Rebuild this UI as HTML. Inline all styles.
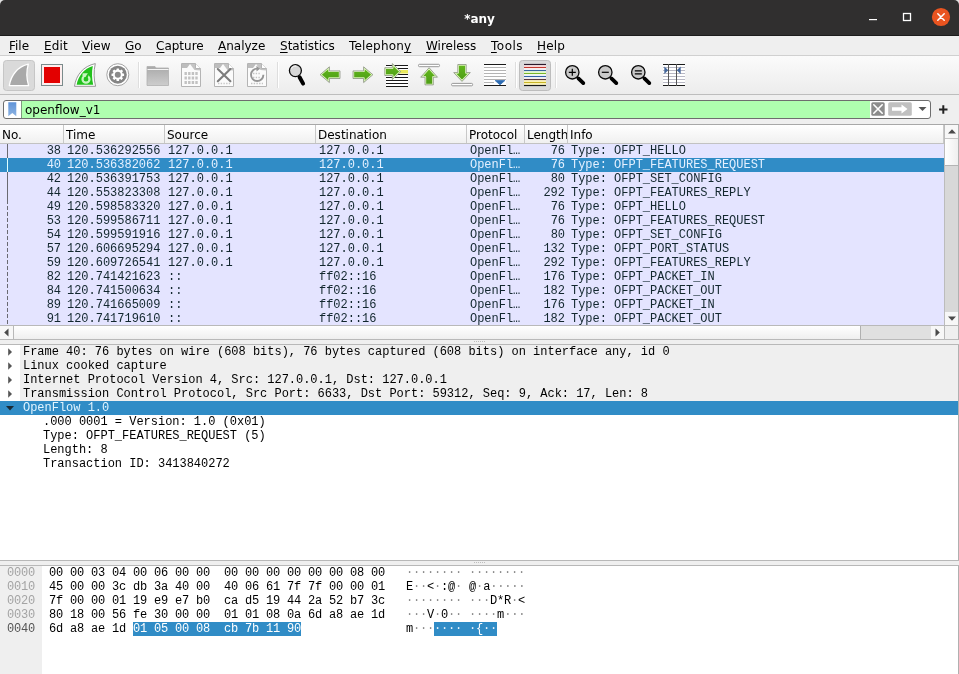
<!DOCTYPE html>
<html><head><meta charset="utf-8"><title>*any</title>
<style>
*{box-sizing:border-box;margin:0;padding:0}
html,body{width:959px;height:674px;overflow:hidden;background:#efefef}
body{position:relative;font:12px "DejaVu Sans","Liberation Sans",sans-serif;color:#000}
.abs{position:absolute;will-change:transform}
#title{left:0;top:0;width:959px;height:36px;background:#302f2f;border-bottom:1px solid #1c1c1c;border-radius:5px 5px 0 0}
#corner-l{left:0;top:0;width:8px;height:8px;background:#e0e0e0}
#corner-r{right:0;top:0;width:8px;height:8px;background:#e0e0e0}
#title .t{position:absolute;left:0;width:959px;top:11px;text-align:center;color:#fff;font-weight:bold;font-size:12px;line-height:16px}
#menu{left:0;top:36px;width:959px;height:20px;background:#efefef;border-bottom:1px solid #d0d0d0}
#menu span{position:absolute;top:2px;line-height:16px;white-space:pre}
#menu u{text-decoration:underline;text-underline-offset:2px}
#tb{left:0;top:56px;width:959px;height:39px;background:linear-gradient(#fbfbfb,#ececec);border-bottom:1px solid #bdbdbd}
#tb svg{position:absolute}
#tb .pressed{position:absolute;top:4px;width:31px;height:31px;background:#dcdcdc;border:1px solid #c4c4c4;border-radius:3px}
#tb .sep{position:absolute;top:8px;width:1px;height:24px;background:#d0d0d0;border-right:1px solid #fff;box-sizing:content-box}
#fbar{left:0;top:95px;width:959px;height:29px;background:#efefef}
#finput{position:absolute;left:3px;top:5px;width:928px;height:19px;border:1px solid #6e6e6e;border-radius:3px;background:#fff;overflow:hidden}
#fbm{position:absolute;left:4px;top:1px}
#fgreen{position:absolute;left:17px;top:0;width:849px;height:17px;background:#afffaf;border-left:1px solid #7f9a7f}
#fgreen span{position:absolute;left:3px;top:1px;line-height:16px}
#plist{left:0;top:124px;width:959px;height:216px;border-top:1px solid #a8a8a8;background:#e4e4ff;overflow:hidden}
#phead{position:absolute;left:0;top:0;width:944px;height:19px;background:linear-gradient(#ffffff,#f0f0f0);border-bottom:1px solid #c2c2c2}
#phead .hc{position:absolute;top:0;height:18px;border-right:1px solid #c8c8c8;overflow:hidden}
#phead .hc span{position:absolute;left:2px;top:2px;line-height:16px;white-space:pre}
.pr{position:absolute;left:0;width:944px;height:14px;font:12px/14px "Liberation Mono",monospace;color:#12272e;white-space:pre;letter-spacing:-0.015px}
.pr .c{position:absolute;top:0}
.pr.sel{background:#308cc6;color:#e4f0ff}
#rel{position:absolute;left:7px;top:19px;width:1px;height:56px;background:#6a6a72}
#rel2{position:absolute;left:7px;top:75px;width:1px;height:125px;background:repeating-linear-gradient(#6a6a72 0 4px,transparent 4px 6px)}
#relsel{position:absolute;left:7px;top:33px;width:1px;height:14px;background:#dff}
#vsb{position:absolute;left:944px;top:0;width:15px;height:200px;background:#d8d8d8;border-left:1px solid #bcbcbc;border-right:1px solid #b0b0b0}
#vsb .btn{position:absolute;left:0;width:13px;height:13px;background:#f7f7f7}
#vsb .btn svg{position:absolute;left:0;top:0}
#vsb .thumb{position:absolute;left:0;top:13px;width:13px;height:28px;background:linear-gradient(90deg,#ffffff,#efefef);border-top:1px solid #c4c4c4;border-bottom:1px solid #b4b4b4}
#hsb{position:absolute;left:0;top:200px;width:944px;height:15px;background:#e0e0e0;border-top:1px solid #b9b9b9;border-bottom:1px solid #b9b9b9}
#hsb .btn{position:absolute;top:0;width:13px;height:13px;background:#f7f7f7}
#hsb .btn svg{position:absolute;left:0;top:0}
#hsb .thumb{position:absolute;left:13px;top:0;width:848px;height:13px;background:linear-gradient(#ffffff,#efefef);border-left:1px solid #b8b8b8;border-right:1px solid #b0b0b0}
#corner{position:absolute;left:944px;top:200px;width:15px;height:15px;background:#efefef;border:1px solid #b9b9b9;border-right-color:#b0b0b0}
#det{left:0;top:344px;width:959px;height:217px;background:#fff;border-top:1px solid #b8b8b8;border-bottom:1px solid #b8b8b8;overflow:hidden}
.dr{position:absolute;left:0;width:959px;height:14px;font:12px/14px "Liberation Mono",monospace;color:#000;white-space:pre;letter-spacing:-0.017px}
.dr span{position:absolute;top:0}
.dr.top{background:linear-gradient(90deg,#fff 20px,#efefef 20px)}
.dr.sel{background:#308cc6;color:#e0f4ff}
#det:after{content:'';position:absolute;right:0;top:0;width:1px;height:100%;background:#b0b0b0}
.dr .ar{position:absolute;left:5px;top:0}
#hex{left:0;top:565px;width:959px;height:109px;background:#fff;border-top:1px solid #b8b8b8;overflow:hidden}
#off{position:absolute;left:0;top:0;width:42px;height:112px;background:#efefef}
.hr{position:absolute;left:0;width:959px;height:14px;font:12px/14px "Liberation Mono",monospace;color:#000;white-space:pre;letter-spacing:-0.2px}
.hr span{position:absolute;top:0}
.hr .o{color:#a4a4a4}
.hr .o.cur{color:#555}
#hex:after{content:'';position:absolute;right:0;top:0;width:1px;height:100%;background:#b0b0b0}
.grip{position:absolute;height:1px;width:11px;background:repeating-linear-gradient(90deg,#bdbdbd 0 1px,transparent 1px 2px)}
.hr b{font-weight:normal;background:#308cc6;color:#fff}
.hr i{font-style:normal;color:#8c8c8c}
.hr b i{color:#e8f2fa}
</style></head><body>
<div id="corner-l" class="abs"></div><div id="corner-r" class="abs"></div>
<div id="title" class="abs"><div class="t">*any</div><svg class="abs" style="left:860px;top:0" width="99" height="36" viewBox="0 0 99 36"><rect x="9" y="19" width="8" height="1.200" fill="#fff"/><rect x="43.5" y="13.5" width="7" height="7" fill="none" stroke="#fff" stroke-width="1.3"/><circle cx="81" cy="17" r="9.100" fill="#e95420"/><path d="M77.800 13.800 L84.200 20.200 M84.200 13.800 L77.800 20.200" stroke="#fff" stroke-width="1.500" stroke-linecap="round"/></svg></div>
<div id="menu" class="abs"><span style="left:9px"><u>F</u>ile</span><span style="left:44px"><i style="font-style:normal;letter-spacing:.15px"><u>E</u>dit</i></span><span style="left:82px"><u>V</u>iew</span><span style="left:125px"><u>G</u>o</span><span style="left:156px"><u>C</u>apture</span><span style="left:218px"><u>A</u>nalyze</span><span style="left:280px"><u>S</u>tatistics</span><span style="left:349px"><i style="font-style:normal;letter-spacing:.18px">Telephon<u>y</u></i></span><span style="left:426px"><u>W</u>ireless</span><span style="left:491px"><i style="font-style:normal;letter-spacing:.5px"><u>T</u>ools</i></span><span style="left:537px"><i style="font-style:normal;letter-spacing:.15px"><u>H</u>elp</i></span></div>
<div id="tb" class="abs"><svg style="left:0;top:0" width="959" height="38" viewBox="0 56 959 38">
<defs>
<linearGradient id="gA" x1="0" y1="0" x2="0" y2="1"><stop offset="0" stop-color="#63b81c"/><stop offset="1" stop-color="#4c9a16"/></linearGradient>
<linearGradient id="gF" x1="0" y1="0" x2="0" y2="1"><stop offset="0" stop-color="#a9a9a9"/><stop offset="1" stop-color="#cdcdcd"/></linearGradient>
<linearGradient id="gL" x1="0" y1="0" x2="0" y2="1"><stop offset="0" stop-color="#e2e2e2"/><stop offset="1" stop-color="#bdbdbd"/></linearGradient>
<clipPath id="cBack"><path d="M320.100 74.700L329.400 66.800V70.900H340V78.500H329.400V82.600Z"/></clipPath>
<clipPath id="cFwd"><path d="M372.900 74.700L363.600 66.800V70.900H353V78.500H363.600V82.600Z"/></clipPath>
<clipPath id="cGoto"><path d="M400.800 71.600L392.300 63.600V67.700H384.800V75.500H392.300V79.600Z"/></clipPath>
<clipPath id="cFirst"><path d="M429.100 67.700L437.500 77.200H433.300V84.900H425V77.200H420.700Z"/></clipPath>
<clipPath id="cLast"><path d="M462 81.400L470.300 72.600H466.200V64.500H457.800V72.600H453.700Z"/></clipPath>
</defs>
<!-- pressed backgrounds -->
<rect x="3.5" y="60.5" width="31" height="30" rx="3" fill="#dadada" stroke="#c6c6c6"/>
<rect x="519.5" y="60.5" width="31" height="30" rx="3" fill="#dadada" stroke="#bdbdbd"/>
<!-- separators -->
<g stroke="#dedede" stroke-width="1"><path d="M138.5 62v26M277.5 62v26M515.5 62v26M555.5 62v26"/></g>
<g stroke="#ffffff" stroke-width="1"><path d="M139.5 62v26M278.5 62v26M516.5 62v26M556.5 62v26"/></g>
<!-- shark fin start (gray) -->
<path d="M9.3 85.6 C11 75 18 66.5 28.3 64.2 C26.3 71 26.6 79 28.6 85.6 Z" fill="#a9a9a9" stroke="#ffffff" stroke-width="1.3" stroke-linejoin="round"/>
<!-- stop -->
<rect x="41.5" y="64.5" width="21" height="21" fill="#fdeeee" stroke="#7a8b8b"/>
<rect x="44" y="67" width="16" height="16" fill="#e30000"/>
<!-- restart fin -->
<path d="M74.5 86.3 C76 75 83.5 66 95.3 63.6 C93.5 71 93.8 79.5 95.6 86.3 Z" fill="#ffffff" stroke="#8c8c8c" stroke-width="0.9" stroke-linejoin="round"/>
<path d="M76.6 84.8 C78.3 76 84 68.5 92.8 66 C91.6 72 91.9 79 93.2 84.8 Z" fill="#22c11c"/>
<circle cx="86" cy="79.200" r="3.500" fill="none" stroke="#c6f6c2" stroke-width="2.200"/>
<path d="M86 79.200L85.200 73v-1h3.300v4z" fill="#22c11c"/>
<path d="M82.300 75.800l0.400-2.600h5.200l-2.400 3.600z" fill="#c6f6c2"/>
<!-- options gear -->
<circle cx="117.8" cy="74.7" r="11" fill="#ffffff" stroke="#a4a4a4" stroke-width="1"/>
<circle cx="117.8" cy="74.7" r="9" fill="#858585"/>
<g fill="#ffffff"><circle cx="117.8" cy="74.7" r="4.900"/>
<g transform="translate(117.8 74.7)"><rect x="-1.300" y="-6.300" width="2.600" height="12.600" rx="0.500"/><rect x="-1.300" y="-6.300" width="2.600" height="12.600" rx="0.500" transform="rotate(45)"/><rect x="-1.300" y="-6.300" width="2.600" height="12.600" rx="0.500" transform="rotate(90)"/><rect x="-1.300" y="-6.300" width="2.600" height="12.600" rx="0.500" transform="rotate(135)"/></g></g>
<circle cx="117.8" cy="74.7" r="3" fill="#8a8a8a"/>
<!-- open folder (disabled) -->
<path d="M147 66.5h8l1 1.5h12.5v17.5h-21.5z" fill="url(#gF)" stroke="#b0b0b0" stroke-width="0.8"/>
<path d="M147.5 69.5h21" stroke="#f4f4f4" stroke-width="1"/>
<!-- save (disabled doc) -->
<g id="doc"><path d="M181.5 63.5h14l5 5v18h-19z" fill="#fbfbfb" stroke="#b4b4b4"/><path d="M182 64h8l-3 4h-5z" fill="#bdbdbd"/><path d="M190 64h5.5l5 5v1.500l-6-0.500z" fill="#c4c4c4"/><path d="M195.500 63.500v5h5" fill="#ffffff" stroke="#b4b4b4" stroke-linejoin="round"/></g>
<g stroke="#c2c2c2" stroke-width="3" stroke-dasharray="2.400 1.200"><path d="M184.500 73.500h14M184.500 78h14M184.500 82.500h14"/></g>
<!-- close (disabled doc with X) -->
<use href="#doc" x="33"/>
<g stroke="#c8c8c8" stroke-width="1.400" stroke-dasharray="1.400 1.300"><path d="M218 83.500h12"/></g>
<path d="M217.800 69l12.600 12.200M230.400 69l-12.600 12.200" stroke="#7c7c7c" stroke-width="2.100" stroke-linecap="round"/>
<!-- reload (disabled doc with circular arrow) -->
<use href="#doc" x="66"/>
<g stroke="#c4c4c4" stroke-width="1.400" stroke-dasharray="1.400 1.300"><path d="M253 73.500h8M253 77.500h8M251 83.500h12"/></g>
<path d="M257.500 68.600 A6.200 6.200 0 1 0 263.400 74.800" fill="none" stroke="#969696" stroke-width="1.900"/>
<path d="M256.500 65.800l3.600 2.900l-3.600 2.700z" fill="#969696"/>
<!-- find -->
<path d="M299.600 77.300l3.500 6.300" stroke="#000" stroke-width="4" stroke-linecap="round"/>
<circle cx="295.400" cy="70.600" r="6" fill="#d6d6d6" stroke="#0a0a0a" stroke-width="1.300"/>
<path d="M291.500 68.500a4.300 4.300 0 0 1 5-2.400" fill="none" stroke="#ffffff" stroke-width="1"/>
<!-- back -->
<path d="M320.100 74.700L329.400 66.800V70.900H340V78.500H329.400V82.600Z" fill="url(#gA)" stroke="#dcf7b8" stroke-width="2.400" stroke-linejoin="round" clip-path="url(#cBack)"/>
<path d="M320.100 74.700L329.400 66.800V70.900H340V78.500H329.400V82.600Z" fill="none" stroke="#8f9489" stroke-width="0.800" stroke-linejoin="round"/>
<!-- forward -->
<path d="M372.900 74.700L363.600 66.800V70.900H353V78.500H363.600V82.600Z" fill="url(#gA)" stroke="#dcf7b8" stroke-width="2.400" stroke-linejoin="round" clip-path="url(#cFwd)"/>
<path d="M372.900 74.700L363.600 66.800V70.900H353V78.500H363.600V82.600Z" fill="none" stroke="#8f9489" stroke-width="0.800" stroke-linejoin="round"/>
<!-- goto -->
<rect x="386" y="65" width="22" height="22" fill="#ffffff"/>
<rect x="386" y="70" width="22" height="3.500" fill="#e9e95c"/>
<g stroke="#1a1a1a" stroke-width="1"><path d="M386 65.500h22M386 68.500h22M386 74.500h22M386 77.500h22M386 80.500h22M386 83.500h22M386 86.500h22"/></g>
<path d="M400.800 71.600L392.300 63.600V67.700H384.800V75.500H392.300V79.600Z" fill="url(#gA)" stroke="#dcf7b8" stroke-width="2.400" stroke-linejoin="round" clip-path="url(#cGoto)"/>
<path d="M400.800 71.600L392.300 63.600V67.700H384.800V75.500H392.300V79.600Z" fill="none" stroke="#8f9489" stroke-width="0.800" stroke-linejoin="round"/>
<!-- first -->
<rect x="418.500" y="64.300" width="21" height="2.400" rx="1" fill="#ffffff" stroke="#8c8c8c" stroke-width="0.900"/>
<path d="M429.100 67.700L437.500 77.200H433.300V84.900H425V77.200H420.700Z" fill="url(#gA)" stroke="#dcf7b8" stroke-width="2.400" stroke-linejoin="round" clip-path="url(#cFirst)"/>
<path d="M429.100 67.700L437.500 77.200H433.300V84.900H425V77.200H420.700Z" fill="none" stroke="#8f9489" stroke-width="0.800" stroke-linejoin="round"/>
<!-- last -->
<rect x="451.600" y="83.400" width="21" height="2.400" rx="1" fill="#ffffff" stroke="#8c8c8c" stroke-width="0.900"/>
<path d="M462 81.400L470.300 72.600H466.200V64.500H457.800V72.600H453.700Z" fill="url(#gA)" stroke="#dcf7b8" stroke-width="2.400" stroke-linejoin="round" clip-path="url(#cLast)"/>
<path d="M462 81.400L470.300 72.600H466.200V64.500H457.800V72.600H453.700Z" fill="none" stroke="#8f9489" stroke-width="0.800" stroke-linejoin="round"/>
<!-- autoscroll -->
<rect x="484" y="64" width="22" height="22" fill="#ffffff"/>
<g stroke="#b4b4b4" stroke-width="1"><path d="M484 67.500h22M484 70.500h22M484 73.500h22M484 76.500h22M484 79.500h22M484 82.500h10"/></g>
<g stroke="#1a1a1a" stroke-width="1.200"><path d="M484 64.500h22M484 85.500h22"/></g>
<path d="M495.200 80.600h9.600l-4.800 4.200z" fill="#2e6cb3" stroke="#2e6cb3" stroke-width="0.800" stroke-linejoin="round"/>
<!-- colorize -->
<rect x="524" y="64" width="22" height="22" fill="#ffffff"/>
<rect x="524" y="65" width="22" height="2" fill="#ffe9e9"/>
<rect x="524" y="71" width="22" height="2" fill="#efffdc"/>
<rect x="524" y="80" width="22" height="5" fill="#fff9c4"/>
<path d="M524 64.500h22" stroke="#2a1a2a" stroke-width="1.200"/>
<path d="M524 67.500h22" stroke="#c23a30" stroke-width="1.200"/>
<path d="M524 70.500h22" stroke="#3a679f" stroke-width="1.200"/>
<path d="M524 73.500h22" stroke="#78b62a" stroke-width="1.200"/>
<path d="M524 76.500h22" stroke="#3461a4" stroke-width="1.200"/>
<path d="M524 79.500h22" stroke="#5a3a40" stroke-width="1.200"/>
<path d="M524 82.500h22" stroke="#c8b428" stroke-width="1.200"/>
<path d="M524 85.500h22" stroke="#1a1a1a" stroke-width="1.200"/>
<!-- zoom in -->
<g id="zm"><path d="M578.400 78.400l4.900 4.700" stroke="#000" stroke-width="3.800" stroke-linecap="round"/><circle cx="572.300" cy="72.300" r="6.700" fill="#c9c9c9" stroke="#0a0a0a" stroke-width="1.300"/></g>
<path d="M568.800 72.300h7M572.300 68.800v7" stroke="#000" stroke-width="1.200"/>
<use href="#zm" x="33"/>
<path d="M601.800 72.300h7" stroke="#000" stroke-width="1.200"/>
<use href="#zm" x="66"/>
<path d="M634.800 70.800h7M634.800 73.800h7" stroke="#000" stroke-width="1.200"/>
<!-- resize columns -->
<rect x="663" y="64" width="22" height="22" fill="#ffffff"/>
<g stroke="#b8b8c4" stroke-width="1"><path d="M663 67.500h22M663 70.500h22M663 73.500h22M663 76.500h22M663 79.500h22M663 82.500h22"/></g>
<g stroke="#1a1a1a" stroke-width="1.200"><path d="M663 64.500h22M663 85.500h22"/></g>
<g stroke="#555" stroke-width="1"><path d="M668.500 64v22M676.500 64v22"/></g>
<path d="M664.300 66.500v7.400l4-3.700z" fill="#44679b"/><path d="M680.700 66.500v7.400l-4-3.700z" fill="#44679b"/>
</svg>
</div>
<div id="fbar" class="abs"><div id="finput"><div id="fbm"><svg width="9" height="15" viewBox="0 0 9 15"><defs><linearGradient id="gB" x1="0" y1="0" x2="0" y2="1"><stop offset="0" stop-color="#5f93d8"/><stop offset="1" stop-color="#8db3e2"/></linearGradient></defs><path d="M0.300 0.300h8v14l-4-3.300l-4 3.300z" fill="url(#gB)"/></svg></div><div id="fgreen"><span>openflow_v1</span></div><svg class="abs" style="left:867px;top:1px" width="14" height="14" viewBox="0 0 14 14"><rect x="0.300" y="0.300" width="13.400" height="13.400" rx="1.500" fill="#8c8c8c"/><path d="M2.800 2.800 L11.200 11.200 M11.200 2.800 L2.800 11.200" stroke="#fff" stroke-width="1.600" stroke-linecap="round"/></svg><svg class="abs" style="left:884px;top:1px" width="24" height="14" viewBox="0 0 24 14"><rect x="0.200" y="0.300" width="23.600" height="13.400" rx="1.500" fill="#c0c0c0"/><path d="M4 5.200h9.500V2.400L19.500 7l-6 4.600V8.800H4z" fill="#fff"/></svg><svg class="abs" style="left:914px;top:5px" width="9" height="6" viewBox="0 0 9 6"><path d="M0.500 1h8L4.500 5z" fill="#555"/></svg></div><svg class="abs" style="left:938px;top:9px" width="11" height="11" viewBox="0 0 11 11"><path d="M5.300 1.300v8.400M1.100 5.500h8.400" stroke="#222" stroke-width="2"/></svg></div>
<div id="plist" class="abs"><div id="phead"><div class="hc" style="left:0px;width:64px"><span>No.</span></div><div class="hc" style="left:64px;width:101px"><span>Time</span></div><div class="hc" style="left:165px;width:151px"><span>Source</span></div><div class="hc" style="left:316px;width:151px"><span>Destination</span></div><div class="hc" style="left:467px;width:58px"><span>Protocol</span></div><div class="hc" style="left:525px;width:43px"><span>Length</span></div><div class="hc" style="left:568px;width:376px"><span>Info</span></div></div><div class="pr" style="top:19px"><span class="c" style="left:0;width:61px;text-align:right">38</span><span class="c" style="left:67px">120.536292556</span><span class="c" style="left:168px">127.0.0.1</span><span class="c" style="left:319px">127.0.0.1</span><span class="c" style="left:470px">OpenFl…</span><span class="c" style="left:525px;width:40px;text-align:right">76</span><span class="c" style="left:571px">Type: OFPT_HELLO</span></div><div class="pr sel" style="top:33px"><span class="c" style="left:0;width:61px;text-align:right">40</span><span class="c" style="left:67px">120.536382062</span><span class="c" style="left:168px">127.0.0.1</span><span class="c" style="left:319px">127.0.0.1</span><span class="c" style="left:470px">OpenFl…</span><span class="c" style="left:525px;width:40px;text-align:right">76</span><span class="c" style="left:571px">Type: OFPT_FEATURES_REQUEST</span></div><div class="pr" style="top:47px"><span class="c" style="left:0;width:61px;text-align:right">42</span><span class="c" style="left:67px">120.536391753</span><span class="c" style="left:168px">127.0.0.1</span><span class="c" style="left:319px">127.0.0.1</span><span class="c" style="left:470px">OpenFl…</span><span class="c" style="left:525px;width:40px;text-align:right">80</span><span class="c" style="left:571px">Type: OFPT_SET_CONFIG</span></div><div class="pr" style="top:61px"><span class="c" style="left:0;width:61px;text-align:right">44</span><span class="c" style="left:67px">120.553823308</span><span class="c" style="left:168px">127.0.0.1</span><span class="c" style="left:319px">127.0.0.1</span><span class="c" style="left:470px">OpenFl…</span><span class="c" style="left:525px;width:40px;text-align:right">292</span><span class="c" style="left:571px">Type: OFPT_FEATURES_REPLY</span></div><div class="pr" style="top:75px"><span class="c" style="left:0;width:61px;text-align:right">49</span><span class="c" style="left:67px">120.598583320</span><span class="c" style="left:168px">127.0.0.1</span><span class="c" style="left:319px">127.0.0.1</span><span class="c" style="left:470px">OpenFl…</span><span class="c" style="left:525px;width:40px;text-align:right">76</span><span class="c" style="left:571px">Type: OFPT_HELLO</span></div><div class="pr" style="top:89px"><span class="c" style="left:0;width:61px;text-align:right">53</span><span class="c" style="left:67px">120.599586711</span><span class="c" style="left:168px">127.0.0.1</span><span class="c" style="left:319px">127.0.0.1</span><span class="c" style="left:470px">OpenFl…</span><span class="c" style="left:525px;width:40px;text-align:right">76</span><span class="c" style="left:571px">Type: OFPT_FEATURES_REQUEST</span></div><div class="pr" style="top:103px"><span class="c" style="left:0;width:61px;text-align:right">54</span><span class="c" style="left:67px">120.599591916</span><span class="c" style="left:168px">127.0.0.1</span><span class="c" style="left:319px">127.0.0.1</span><span class="c" style="left:470px">OpenFl…</span><span class="c" style="left:525px;width:40px;text-align:right">80</span><span class="c" style="left:571px">Type: OFPT_SET_CONFIG</span></div><div class="pr" style="top:117px"><span class="c" style="left:0;width:61px;text-align:right">57</span><span class="c" style="left:67px">120.606695294</span><span class="c" style="left:168px">127.0.0.1</span><span class="c" style="left:319px">127.0.0.1</span><span class="c" style="left:470px">OpenFl…</span><span class="c" style="left:525px;width:40px;text-align:right">132</span><span class="c" style="left:571px">Type: OFPT_PORT_STATUS</span></div><div class="pr" style="top:131px"><span class="c" style="left:0;width:61px;text-align:right">59</span><span class="c" style="left:67px">120.609726541</span><span class="c" style="left:168px">127.0.0.1</span><span class="c" style="left:319px">127.0.0.1</span><span class="c" style="left:470px">OpenFl…</span><span class="c" style="left:525px;width:40px;text-align:right">292</span><span class="c" style="left:571px">Type: OFPT_FEATURES_REPLY</span></div><div class="pr" style="top:145px"><span class="c" style="left:0;width:61px;text-align:right">82</span><span class="c" style="left:67px">120.741421623</span><span class="c" style="left:168px">::</span><span class="c" style="left:319px">ff02::16</span><span class="c" style="left:470px">OpenFl…</span><span class="c" style="left:525px;width:40px;text-align:right">176</span><span class="c" style="left:571px">Type: OFPT_PACKET_IN</span></div><div class="pr" style="top:159px"><span class="c" style="left:0;width:61px;text-align:right">84</span><span class="c" style="left:67px">120.741500634</span><span class="c" style="left:168px">::</span><span class="c" style="left:319px">ff02::16</span><span class="c" style="left:470px">OpenFl…</span><span class="c" style="left:525px;width:40px;text-align:right">182</span><span class="c" style="left:571px">Type: OFPT_PACKET_OUT</span></div><div class="pr" style="top:173px"><span class="c" style="left:0;width:61px;text-align:right">89</span><span class="c" style="left:67px">120.741665009</span><span class="c" style="left:168px">::</span><span class="c" style="left:319px">ff02::16</span><span class="c" style="left:470px">OpenFl…</span><span class="c" style="left:525px;width:40px;text-align:right">176</span><span class="c" style="left:571px">Type: OFPT_PACKET_IN</span></div><div class="pr" style="top:187px"><span class="c" style="left:0;width:61px;text-align:right">91</span><span class="c" style="left:67px">120.741719610</span><span class="c" style="left:168px">::</span><span class="c" style="left:319px">ff02::16</span><span class="c" style="left:470px">OpenFl…</span><span class="c" style="left:525px;width:40px;text-align:right">182</span><span class="c" style="left:571px">Type: OFPT_PACKET_OUT</span></div><div id="rel"></div><div id="rel2"></div><div id="relsel"></div><div id="vsb"><div class="btn" style="top:0"><svg width="14" height="13" viewBox="0 0 14 13"><path d="M3 8.500h8L7 4.300z" fill="#4a4a4a"/></svg></div><div class="thumb"></div><div class="btn" style="bottom:0"><svg width="14" height="13" viewBox="0 0 14 13"><path d="M3 4.500h8L7 8.700z" fill="#4a4a4a"/></svg></div></div><div id="hsb"><div class="btn" style="left:0"><svg width="13" height="13" viewBox="0 0 13 13"><path d="M8.500 2.500v8L4.200 6.500z" fill="#4a4a4a"/></svg></div><div class="thumb"></div><div class="btn" style="right:0"><svg width="13" height="13" viewBox="0 0 13 13"><path d="M4.500 2.500v8L8.800 6.500z" fill="#4a4a4a"/></svg></div></div><div id="corner"></div></div>
<div id="det" class="abs"><div class="dr top" style="top:0px"><svg class="ar" width="10" height="14" viewBox="0 0 10 14"><path d="M3.200 3.300v7.400L7 7z" fill="#555"/></svg><span style="left:23px">Frame 40: 76 bytes on wire (608 bits), 76 bytes captured (608 bits) on interface any, id 0</span></div><div class="dr top" style="top:14px"><svg class="ar" width="10" height="14" viewBox="0 0 10 14"><path d="M3.200 3.300v7.400L7 7z" fill="#555"/></svg><span style="left:23px">Linux cooked capture</span></div><div class="dr top" style="top:28px"><svg class="ar" width="10" height="14" viewBox="0 0 10 14"><path d="M3.200 3.300v7.400L7 7z" fill="#555"/></svg><span style="left:23px">Internet Protocol Version 4, Src: 127.0.0.1, Dst: 127.0.0.1</span></div><div class="dr top" style="top:42px"><svg class="ar" width="10" height="14" viewBox="0 0 10 14"><path d="M3.200 3.300v7.400L7 7z" fill="#555"/></svg><span style="left:23px">Transmission Control Protocol, Src Port: 6633, Dst Port: 59312, Seq: 9, Ack: 17, Len: 8</span></div><div class="dr top sel" style="top:56px"><svg class="ar" width="10" height="14" viewBox="0 0 10 14"><path d="M1 5h8L5 9.5z" fill="#1a2a35"/></svg><span style="left:23px">OpenFlow 1.0</span></div><div class="dr" style="top:70px"><span style="left:43px">.000 0001 = Version: 1.0 (0x01)</span></div><div class="dr" style="top:84px"><span style="left:43px">Type: OFPT_FEATURES_REQUEST (5)</span></div><div class="dr" style="top:98px"><span style="left:43px">Length: 8</span></div><div class="dr" style="top:112px"><span style="left:43px">Transaction ID: 3413840272</span></div></div>
<div id="hex" class="abs"><div id="off"></div><div class="hr" style="top:0px"><span class="o" style="left:7px">0000</span><span style="left:49px">00 00 03 04 00 06 00 00  00 00 00 00 00 00 08 00</span><span style="left:406px"><i>········</i> <i>········</i></span></div><div class="hr" style="top:14px"><span class="o" style="left:7px">0010</span><span style="left:49px">45 00 00 3c db 3a 40 00  40 06 61 7f 7f 00 00 01</span><span style="left:406px">E<i>··</i>&lt;<i>·</i>:@<i>·</i> @<i>·</i>a<i>·····</i></span></div><div class="hr" style="top:28px"><span class="o" style="left:7px">0020</span><span style="left:49px">7f 00 00 01 19 e9 e7 b0  ca d5 19 44 2a 52 b7 3c</span><span style="left:406px"><i>········</i> <i>···</i>D*R<i>·</i>&lt;</span></div><div class="hr" style="top:42px"><span class="o" style="left:7px">0030</span><span style="left:49px">80 18 00 56 fe 30 00 00  01 01 08 0a 6d a8 ae 1d</span><span style="left:406px"><i>···</i>V<i>·</i>0<i>··</i> <i>····</i>m<i>···</i></span></div><div class="hr" style="top:56px"><span class="o cur" style="left:7px">0040</span><span style="left:49px">6d a8 ae 1d <b>01 05 00 08  cb 7b 11 90</b></span><span style="left:406px">m<i>···</i><b><i>····</i> <i>·</i>{<i>··</i></b></span></div></div>
<div class="grip abs" style="left:474px;top:341px"></div><div class="grip abs" style="left:474px;top:562px"></div>
</body></html>
